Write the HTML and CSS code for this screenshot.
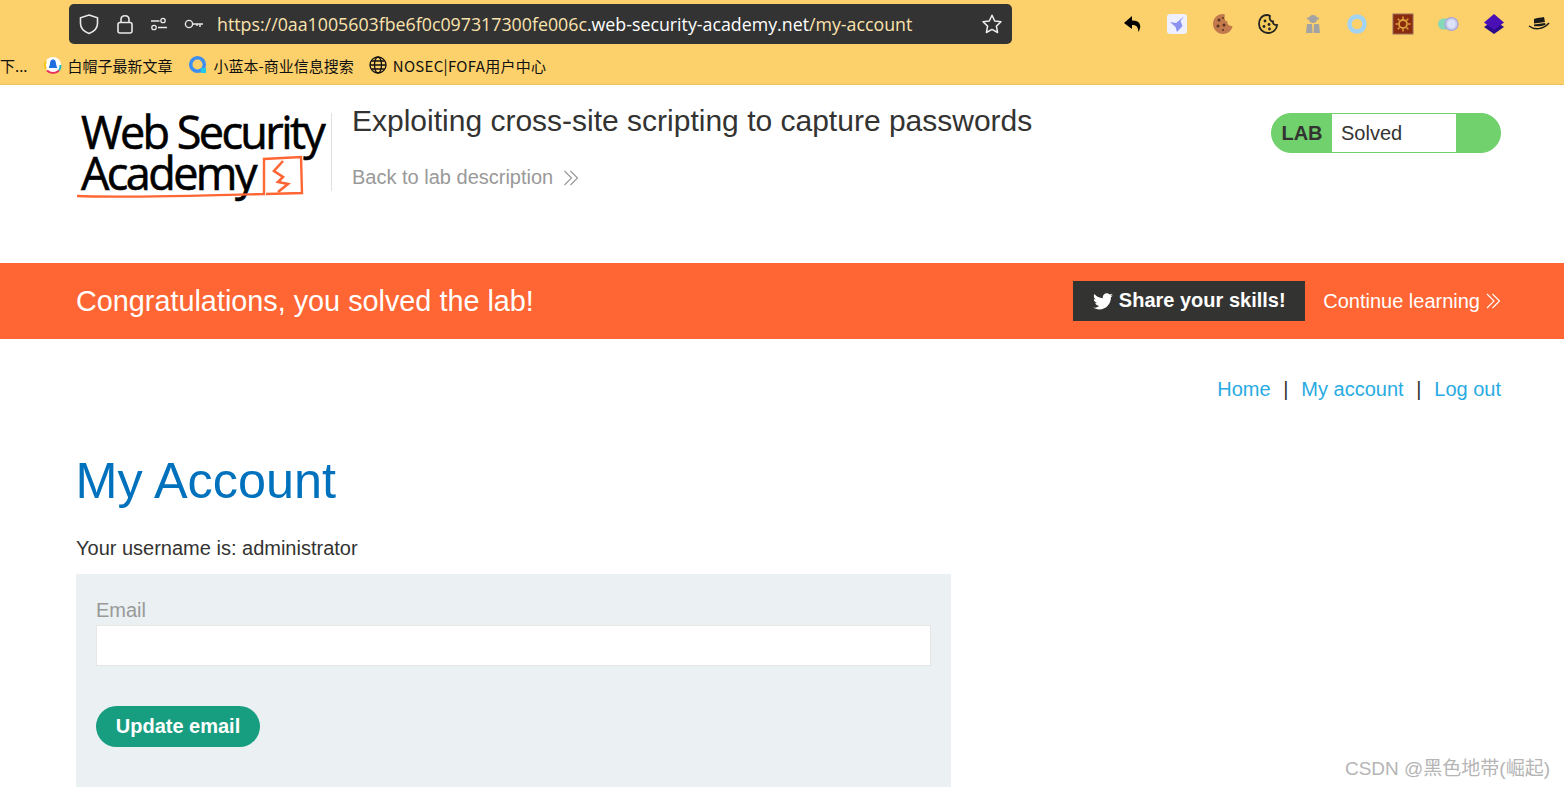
FILE: index.html
```html
<!DOCTYPE html>
<html lang="en">
<head>
    <meta charset="UTF-8">
    <title>Exploiting cross-site scripting to capture passwords</title>
    <link rel="stylesheet" href="styles.css">
</head>
<body>

    <!-- Browser toolbar -->
    <div class="browser">
        <div class="browser-top">
            <div class="urlbar">
                <svg class="url-icon" width="22" height="22" viewBox="0 0 22 22"><path d="M11 2 L19.5 4.8 V10.5 C19.5 15.5 15.5 18.8 11 20.5 C6.5 18.8 2.5 15.5 2.5 10.5 V4.8 Z" fill="none" stroke="#e8e8e8" stroke-width="1.6"/></svg>
                <svg class="url-icon" width="18" height="22" viewBox="0 0 18 22"><rect x="2" y="9.5" width="14" height="10.5" rx="2" fill="none" stroke="#e8e8e8" stroke-width="1.6"/><path d="M5 9.5 V6.5 C5 1.5 13 1.5 13 6.5 V9.5" fill="none" stroke="#e8e8e8" stroke-width="1.6"/></svg>
                <svg class="url-icon" width="18" height="16" viewBox="0 0 18 16"><circle cx="13" cy="4.5" r="2.2" fill="none" stroke="#e8e8e8" stroke-width="1.3"/><path d="M1 5 H9.5 M8 11.5 H17" stroke="#e8e8e8" stroke-width="1.3"/><circle cx="4" cy="11.5" r="2.2" fill="none" stroke="#e8e8e8" stroke-width="1.3"/></svg>
                <svg class="url-icon" width="20" height="12" viewBox="0 0 20 12"><circle cx="5" cy="6" r="3.6" fill="none" stroke="#e8e8e8" stroke-width="1.4"/><path d="M8.6 6 H19 M16 6 V9 M13 6 V8" stroke="#e8e8e8" stroke-width="1.4"/></svg>
                <div class="url-text">https://0aa1005603fbe6f0c097317300fe006c<span>.web-security-academy.net</span>/my-account</div>
                <svg class="star" width="22" height="22" viewBox="0 0 22 22"><path d="M11 2.2 L13.7 8 L20 8.8 L15.4 13.1 L16.6 19.5 L11 16.4 L5.4 19.5 L6.6 13.1 L2 8.8 L8.3 8 Z" fill="none" stroke="#eee" stroke-width="1.5" stroke-linejoin="round"/></svg>
            </div>
            <div class="extensions">
                <svg width="20" height="22" viewBox="0 0 20 22"><path d="M9 3 L1 10 L9 16 V12 C13 12 15 13 15.5 19 C18.5 14 18.5 7.5 9 7.5 Z" fill="#000"/></svg>
                <svg width="22" height="22" viewBox="0 0 22 22"><rect x="1" y="1" width="20" height="20" rx="3" fill="#eef0fd"/><path d="M18 3.500 L14.500 8 L16.500 13 L11 19 L9.500 14 L4 9 L10 10 Z" fill="#8b93f0"/></svg>
                <svg width="22" height="22" viewBox="0 0 22 22"><path d="M11 1 C5 1 1 5.500 1 11 C1 16.500 5.500 21 11 21 C16.500 21 20 17 20.500 13 C17 13 15 11 15.500 8.500 C13 8.500 12 5 13 1.500 Z" fill="#c27a4d"/><circle cx="7" cy="7" r="1.500" fill="#5a3320"/><circle cx="11" cy="5" r="1" fill="#5a3320"/><circle cx="6" cy="13" r="1.500" fill="#5a3320"/><circle cx="12" cy="12" r="1.500" fill="#5a3320"/><circle cx="11" cy="17" r="1" fill="#5a3320"/></svg>
                <svg width="22" height="22" viewBox="0 0 22 22"><path d="M10 2 C5 2 2 6 2 11 C2 16 6 20 11 20 C16 20 20 16.500 20 12 C17.500 12.500 15.500 10.500 16 8.500 C13.500 8.500 12 6 13 3 C12 2.300 11 2 10 2 Z" fill="#f4cb5a" stroke="#222" stroke-width="1.800"/><circle cx="8" cy="8" r="1.400" fill="#222"/><circle cx="7" cy="13.500" r="1.400" fill="#222"/><circle cx="12" cy="11.500" r="1.400" fill="#222"/><circle cx="12.500" cy="16" r="1.400" fill="#222"/></svg>
                <svg width="20" height="22" viewBox="0 0 20 22"><circle cx="10" cy="6" r="4" fill="#a3a3a3"/><rect x="4" y="4.500" width="12" height="2" fill="#a3a3a3"/><path d="M3 20 L4 11 H9 L9.500 20 Z M17 20 L16 11 H11 L10.500 20 Z" fill="#a3a3a3"/></svg>
                <svg width="22" height="22" viewBox="0 0 22 22"><circle cx="11" cy="11" r="7.500" fill="none" stroke="#a3d3f2" stroke-width="4.500"/></svg>
                <svg width="22" height="22" viewBox="0 0 22 22"><rect x="1" y="1" width="20" height="20" fill="#8a2a0e" stroke="#9a6a5a"/><circle cx="11" cy="11" r="4" fill="none" stroke="#dca03c" stroke-width="1.800"/><path d="M11 3.500 V6 M11 16 V18.500 M3.500 11 H6 M16 11 H18.500 M5.700 5.700 L7.500 7.500 M14.500 14.500 L16.300 16.300 M16.300 5.700 L14.500 7.500 M7.500 14.500 L5.700 16.300" stroke="#dca03c" stroke-width="1.500"/></svg>
                <svg width="22" height="16" viewBox="0 0 22 16"><rect x="1" y="2.500" width="18" height="11" rx="5.500" fill="#86d9b8"/><circle cx="14.500" cy="8" r="6.500" fill="#c9cdf0" stroke="#a9a3cf" stroke-width="1.200"/><circle cx="14.500" cy="8" r="4" fill="#dfe3f7"/></svg>
                <svg width="22" height="22" viewBox="0 0 22 22"><path d="M11 7 L21 14 L11 21 L1 14 Z" fill="#2b0a8a"/><path d="M11 1 L21 9.500 L11 17 L1 9.500 Z" fill="#4a0fb5"/></svg>
                <svg width="22" height="16" viewBox="0 0 22 16"><path d="M6 3 C9 2 13 1.500 16 1 L17.500 9 C13 10.500 9 10.500 6 10 Z" fill="#1a1a1a"/><path d="M1 10 C6 14 15 14 21 7" fill="none" stroke="#1a1a1a" stroke-width="1.400"/><path d="M6 8 L17 6.500" stroke="#fcd06a" stroke-width="1"/></svg>
            </div>
        </div>
        <div class="bookmarks">
            <span class="bm bm-cut">下...</span>
            <span class="bm">
                <svg width="18" height="18" viewBox="0 0 18 18"><circle cx="9" cy="9" r="8" fill="#fff"/><path d="M2 5 A8.500 8.500 0 0 0 2 13" fill="none" stroke="#f5c518" stroke-width="2"/><path d="M3 14.500 A8.500 8.500 0 0 0 15 14.500" fill="none" stroke="#e8315a" stroke-width="2"/><path d="M15 14.500 A8.500 8.500 0 0 0 16.500 9" fill="none" stroke="#20b8c8" stroke-width="2"/><path d="M9 3.500 C6.500 3.500 6 6 6 8 L4.800 12 H13.200 L12 8 C12 6 11.500 3.500 9 3.500 Z" fill="#1f6fe0"/></svg>
                白帽子最新文章
            </span>
            <span class="bm">
                <svg width="20" height="20" viewBox="0 0 20 20"><circle cx="9.500" cy="9.500" r="6.800" fill="none" stroke="#3d8ef0" stroke-width="3.500"/><rect x="13" y="13" width="5" height="5" fill="#22c8e8"/></svg>
                小蓝本-商业信息搜索
            </span>
            <span class="bm">
                <svg width="18" height="18" viewBox="0 0 18 18"><g fill="none" stroke="#111" stroke-width="1.300"><circle cx="9" cy="9" r="8"/><ellipse cx="9" cy="9" rx="3.500" ry="8"/><path d="M1 9 H17 M2.200 5 H15.800 M2.200 13 H15.800"/></g></svg>
                NOSEC|FOFA用户中心
            </span>
        </div>
    </div>

    <!-- Lab header -->
    <div class="lab-header">
        <div class="logo">
            <div class="logo-text">Web Security<br>Academy</div>
            <svg class="logo-mark" width="232" height="50" viewBox="0 0 232 50">
                <path d="M1 43 C40 45 110 43 188 41 L188 6 L225 4 L226 40 L190 41" fill="none" stroke="#ff6633" stroke-width="2.400"/>
                <path d="M207 8 L198 18 L207 24 L202 29 L212 31 L202 39" fill="none" stroke="#ff6633" stroke-width="2.600"/>
            </svg>
        </div>
        <div class="lab-title">
            <h2>Exploiting cross-site scripting to capture passwords</h2>
            <a class="back-link">Back to lab description
                <svg width="16" height="16" viewBox="0 0 16 16"><path d="M1.500 1 L8.500 8 L1.500 15 M7.500 1 L14.500 8 L7.500 15" fill="none" stroke="#999" stroke-width="1.200"/></svg>
            </a>
        </div>
        <div class="lab-status">
            <span class="lab-tag">LAB</span>
            <span class="lab-value">Solved</span>
        </div>
    </div>

    <!-- Solved banner -->
    <div class="banner">
        <div class="banner-text">Congratulations, you solved the lab!</div>
        <a class="share-btn">
            <svg width="20" height="17" viewBox="0 0 24 20"><path d="M24 2.400 C23.100 2.800 22.200 3.100 21.200 3.200 C22.200 2.600 23 1.600 23.400 0.400 C22.400 1 21.400 1.400 20.200 1.700 C19.300 0.700 18 0 16.600 0 C13.900 0 11.700 2.200 11.700 4.900 C11.700 5.300 11.700 5.700 11.800 6 C7.700 5.800 4.100 3.900 1.700 0.900 C1.300 1.600 1 2.500 1 3.400 C1 5.100 1.900 6.600 3.200 7.500 C2.400 7.500 1.600 7.200 1 6.900 V7 C1 9.400 2.700 11.400 4.900 11.800 C4.500 11.900 4.100 12 3.600 12 C3.300 12 3 12 2.700 11.900 C3.300 13.900 5.100 15.300 7.300 15.300 C5.600 16.600 3.500 17.400 1.200 17.400 C0.800 17.400 0.400 17.400 0 17.300 C2.200 18.700 4.800 19.500 7.500 19.500 C16.600 19.500 21.500 12 21.500 5.500 V4.900 C22.500 4.200 23.300 3.300 24 2.400 Z" fill="#fff"/></svg>
            <span>Share your skills!</span>
        </a>
        <a class="continue-link">Continue learning
            <svg width="15" height="16" viewBox="0 0 15 16"><path d="M1 1 L8 8 L1 15 M6.500 1 L13.500 8 L6.500 15" fill="none" stroke="#fff" stroke-width="1.100"/></svg>
        </a>
    </div>

    <!-- Content -->
    <div class="content">
        <div class="top-links">
            <a>Home</a><span>|</span><a>My account</a><span>|</span><a>Log out</a>
        </div>
        <h1>My Account</h1>
        <p class="username">Your username is: administrator</p>
        <form class="email-form">
            <label for="email">Email</label>
            <input type="text" id="email">
            <button type="button">Update email</button>
        </form>
    </div>

    <div class="watermark">CSDN @黑色地带(崛起)</div>

</body>
</html>
```

FILE: styles.css
```css
body {
    font-family: "Liberation Sans", Arial, sans-serif;
    background-color: #fff;
    color: #333332;
    margin: 0;
    padding: 0;
    height: 789px;
    overflow: hidden;
    position: relative;
}

/* browser toolbar */
.browser {
    background-color: #fcd06a;
    height: 85px;
    box-sizing: border-box;
    border-bottom: 1px solid #f0c35c;
}
.browser-top {
    display: flex;
    align-items: flex-start;
    height: 48px;
    padding: 4px 0 0 69px;
    box-sizing: border-box;
}
.urlbar {
    width: 943px;
    height: 40px;
    box-sizing: border-box;
    background-color: #333;
    border-radius: 5px;
    display: flex;
    align-items: center;
    padding: 0 9px;
    color: #fbe3ae;
}
.url-icon {
    margin-right: 16px;
    flex: none;
}
.url-text {
    font-family: "Open Sans", sans-serif;
    font-size: 17.8px;
    margin-left: -3px;
    white-space: nowrap;
    flex: 1;
}
.url-text span {
    color: #fff;
}
.star {
    flex: none;
}
.extensions {
    display: flex;
    align-items: center;
    justify-content: space-between;
    width: 427px;
    height: 40px;
    margin-left: 111px;
}
.bookmarks {
    display: flex;
    align-items: center;
    height: 34px;
    font-family: "Noto Sans CJK SC", "Noto Sans", sans-serif;
    font-size: 15px;
    color: #111;
}
.bm {
    display: flex;
    align-items: center;
    gap: 6px;
    margin-right: 15px;
    white-space: nowrap;
}
.bm:last-child {
    letter-spacing: 0.3px;
}
.bm-cut {
    margin-right: 16px;
}

/* lab header */
.lab-header {
    display: flex;
    height: 178px;
    padding: 0 63px 0 76px;
}
.logo {
    width: 255px;
    height: 78px;
    margin-top: 28px;
    border-right: 1px solid #e0e0e0;
    position: relative;
    flex: none;
}
.logo-text {
    font-family: "Open Sans", sans-serif;
    font-size: 45px;
    line-height: 41px;
    letter-spacing: -2.6px;
    color: #000;
    -webkit-text-stroke: 0.6px #000;
    margin-top: -2px;
    padding: 0 0 0 5px;
    white-space: nowrap;
}
.logo-mark {
    position: absolute;
    left: 0;
    top: 40px;
}
.lab-title {
    padding: 19px 0 0 20px;
    flex: 1;
}
.lab-title h2 {
    font-size: 30px;
    font-weight: normal;
    line-height: 34px;
    margin: 0 0 28px 0;
}
.back-link {
    font-size: 20px;
    color: #999;
    display: flex;
    align-items: center;
    gap: 10px;
}
.lab-status {
    display: flex;
    align-items: stretch;
    width: 230px;
    height: 40px;
    box-sizing: border-box;
    margin-top: 28px;
    background-color: #70d16d;
    border: 1px solid #70d16d;
    border-radius: 20px;
    flex: none;
}
.lab-tag {
    width: 60px;
    text-align: center;
    font-size: 20px;
    font-weight: bold;
    line-height: 38px;
}
.lab-value {
    width: 124px;
    box-sizing: border-box;
    background-color: #fff;
    padding-left: 9px;
    font-size: 20px;
    line-height: 38px;
}

/* solved banner */
.banner {
    display: flex;
    align-items: center;
    height: 76px;
    padding: 0 63px 0 76px;
    background-color: #ff6633;
    color: #fff;
}
.banner-text {
    font-size: 28.8px;
    flex: 1;
}
.share-btn {
    display: flex;
    align-items: center;
    justify-content: center;
    gap: 6px;
    width: 232px;
    height: 40px;
    background-color: #333332;
    font-size: 20px;
    font-weight: bold;
}
.share-btn span {
    padding-bottom: 2px;
}
.continue-link {
    display: flex;
    align-items: center;
    gap: 6px;
    margin-left: 18px;
    font-size: 20px;
}

/* content */
.content {
    padding: 0 63px 0 76px;
}
.top-links {
    display: flex;
    justify-content: flex-end;
    gap: 12.75px;
    padding-top: 38px;
    font-size: 20px;
    line-height: 24px;
    color: #29abe2;
}
.top-links span {
    color: #333332;
}
.content h1 {
    font-size: 50.4px;
    font-weight: normal;
    line-height: 60px;
    color: #0071bc;
    margin: 50px 0 0 -0.5px;
}
.username {
    font-size: 20px;
    line-height: 24px;
    margin: 25px 0 14px 0;
}
.email-form {
    width: 875px;
    height: 213px;
    box-sizing: border-box;
    background-color: #ebf0f2;
    padding: 24px 20px 0 20px;
}
.email-form label {
    display: block;
    font-size: 20px;
    line-height: 24px;
    color: #999;
    margin-bottom: 3px;
}
.email-form input {
    display: block;
    width: 100%;
    height: 41px;
    box-sizing: border-box;
    background-color: #fff;
    border: 1px solid #e6e6e6;
    margin: 0 0 40px 0;
}
.email-form button {
    display: block;
    width: 164px;
    height: 41px;
    background-color: #179d7f;
    color: #fff;
    border: none;
    border-radius: 25px;
    font-family: "Liberation Sans", Arial, sans-serif;
    font-size: 20px;
    font-weight: bold;
    padding: 0;
}

.watermark {
    position: absolute;
    right: 14px;
    top: 756px;
    font-family: "Liberation Sans", "Noto Sans CJK SC", sans-serif;
    font-size: 19px;
    line-height: 26px;
    color: #b5b5b5;
    white-space: nowrap;
}
```
